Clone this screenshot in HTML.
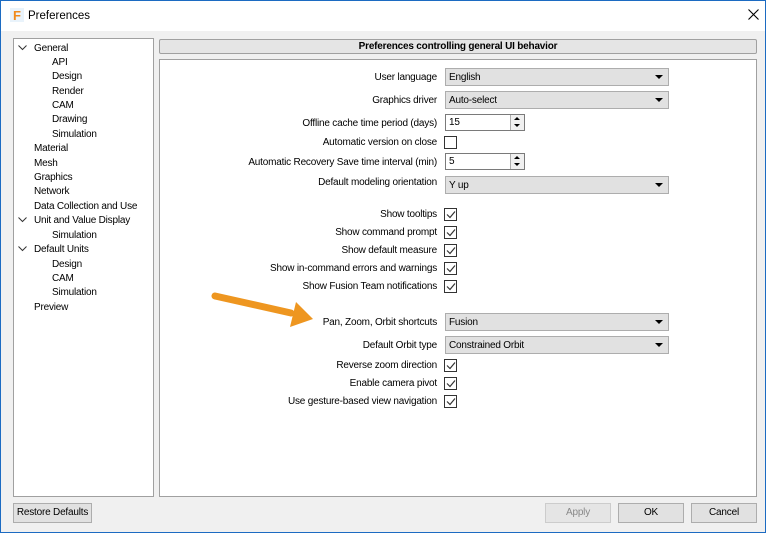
<!DOCTYPE html>
<html><head><style>
*{margin:0;padding:0;box-sizing:border-box}
body{width:768px;height:534px;background:#fff;font-family:"Liberation Sans",Arial,sans-serif;font-size:10px;letter-spacing:-0.2px;color:#000;position:relative;overflow:hidden}
.win{position:absolute;left:0;top:0;width:766px;height:533px;border:1px solid #1c6bc2;background:#f0f0f0}
.title{position:absolute;left:0;top:0;width:764px;height:30px;background:#fff}
.abs{position:absolute}
.panel{position:absolute;background:#fff;border:1px solid #a0a0a0}
.t{position:absolute;white-space:nowrap;line-height:13px}
.lbl{position:absolute;right:328px;white-space:nowrap;line-height:13px}
.dd{position:absolute;left:444px;width:224px;height:18px;background:#e1e1e1;border:1px solid #adadad;padding:2px 0 0 3px;line-height:13px}
.dd:after{content:"";position:absolute;right:5px;top:6px;border-left:4px solid transparent;border-right:4px solid transparent;border-top:4px solid #000}
.sp{position:absolute;left:444px;width:80px;height:17px;background:#fff;border:1px solid #7a7a7a;padding:1px 0 0 3px;line-height:13px}
.sp i{position:absolute;right:0;top:0;width:14px;height:15px;border-left:1px solid #adadad;background:#f0f0f0}
.sp i:before{content:"";position:absolute;left:3px;top:2px;border-left:3px solid transparent;border-right:3px solid transparent;border-bottom:3px solid #000}
.sp i:after{content:"";position:absolute;left:3px;top:9px;border-left:3px solid transparent;border-right:3px solid transparent;border-top:3px solid #000}
.cb{position:absolute;left:443px;width:13px;height:13px;border:1px solid #333;background:#fff}
.btn{position:absolute;top:502px;height:20px;background:#e1e1e1;border:1px solid #adadad;text-align:center;line-height:18px;white-space:nowrap}
</style></head><body>
<div class="win">
<div class="title"></div>
<div class="abs" style="left:9px;top:7px;width:14px;height:14px;background:#e9f3fb"></div>
<div class="abs" style="left:12px;top:8px;font-weight:bold;color:#f08a1c;font-size:13px;line-height:13px">F</div>
<div class="t" style="left:27px;top:8px;font-size:11.5px;line-height:14px;letter-spacing:0">Preferences</div>
<svg class="abs" style="left:747px;top:8px" width="11" height="11"><path d="M0.5 0.5L10.5 10.5M10.5 0.5L0.5 10.5" stroke="#000" stroke-width="1.1"/></svg>

<div class="panel" style="left:12px;top:37px;width:141px;height:459px"></div>
<svg class="abs" style="left:17px;top:44px" width="9" height="6"><path d="M0.5 0.5L4.5 4.5L8.5 0.5" stroke="#333" fill="none"/></svg>
<svg class="abs" style="left:17px;top:216px" width="9" height="6"><path d="M0.5 0.5L4.5 4.5L8.5 0.5" stroke="#333" fill="none"/></svg>
<svg class="abs" style="left:17px;top:245px" width="9" height="6"><path d="M0.5 0.5L4.5 4.5L8.5 0.5" stroke="#333" fill="none"/></svg>
<div class="t" style="left:33px;top:41px">General</div>
<div class="t" style="left:51px;top:55px">API</div>
<div class="t" style="left:51px;top:69px">Design</div>
<div class="t" style="left:51px;top:84px">Render</div>
<div class="t" style="left:51px;top:98px">CAM</div>
<div class="t" style="left:51px;top:112px">Drawing</div>
<div class="t" style="left:51px;top:127px">Simulation</div>
<div class="t" style="left:33px;top:141px">Material</div>
<div class="t" style="left:33px;top:156px">Mesh</div>
<div class="t" style="left:33px;top:170px">Graphics</div>
<div class="t" style="left:33px;top:184px">Network</div>
<div class="t" style="left:33px;top:199px">Data Collection and Use</div>
<div class="t" style="left:33px;top:213px">Unit and Value Display</div>
<div class="t" style="left:51px;top:228px">Simulation</div>
<div class="t" style="left:33px;top:242px">Default Units</div>
<div class="t" style="left:51px;top:257px">Design</div>
<div class="t" style="left:51px;top:271px">CAM</div>
<div class="t" style="left:51px;top:285px">Simulation</div>
<div class="t" style="left:33px;top:300px">Preview</div>

<div class="abs" style="left:158px;top:38px;width:598px;height:15px;background:#e5e5e5;border:1px solid #a0a0a0;border-radius:2px;text-align:center;font-weight:bold;line-height:13px">Preferences controlling general UI behavior</div>
<div class="panel" style="left:158px;top:58px;width:598px;height:438px"></div>

<div class="lbl" style="top:70px">User language</div><div class="dd" style="top:67px">English</div>
<div class="lbl" style="top:93px">Graphics driver</div><div class="dd" style="top:90px">Auto-select</div>
<div class="lbl" style="top:116px">Offline cache time period (days)</div><div class="sp" style="top:113px">15<i></i></div>
<div class="lbl" style="top:135px">Automatic version on close</div><div class="cb" style="top:135px"></div>
<div class="lbl" style="top:155px">Automatic Recovery Save time interval (min)</div><div class="sp" style="top:152px">5<i></i></div>
<div class="lbl" style="top:175px">Default modeling orientation</div><div class="dd" style="top:175px">Y up</div>

<div class="lbl" style="top:207px">Show tooltips</div>
<div class="lbl" style="top:225px">Show command prompt</div>
<div class="lbl" style="top:243px">Show default measure</div>
<div class="lbl" style="top:261px">Show in-command errors and warnings</div>
<div class="lbl" style="top:279px">Show Fusion Team notifications</div>
<div class="lbl" style="top:315px">Pan, Zoom, Orbit shortcuts</div><div class="dd" style="top:312px">Fusion</div>
<div class="lbl" style="top:338px">Default Orbit type</div><div class="dd" style="top:335px">Constrained Orbit</div>
<div class="lbl" style="top:358px">Reverse zoom direction</div>
<div class="lbl" style="top:376px">Enable camera pivot</div>
<div class="lbl" style="top:394px">Use gesture-based view navigation</div>
<svg class="abs" style="left:0;top:0" width="768" height="534">
<g fill="#fff" stroke="#333" stroke-width="1">
<rect x="443.5" y="207.5" width="12" height="12"/><rect x="443.5" y="225.5" width="12" height="12"/><rect x="443.5" y="243.5" width="12" height="12"/><rect x="443.5" y="261.5" width="12" height="12"/><rect x="443.5" y="279.5" width="12" height="12"/><rect x="443.5" y="358.5" width="12" height="12"/><rect x="443.5" y="376.5" width="12" height="12"/><rect x="443.5" y="394.5" width="12" height="12"/>
</g>
<g fill="none" stroke="#333" stroke-width="1.2">
<path d="M446 213.5l3 3l5-6"/><path d="M446 231.5l3 3l5-6"/><path d="M446 249.5l3 3l5-6"/><path d="M446 267.5l3 3l5-6"/><path d="M446 285.5l3 3l5-6"/><path d="M446 364.5l3 3l5-6"/><path d="M446 382.5l3 3l5-6"/><path d="M446 400.5l3 3l5-6"/>
</g>
<path d="M214 295L290 312" stroke="#ee9620" stroke-width="7" stroke-linecap="round"/>
<path d="M295 301L289 326L312 318Z" fill="#ee9620"/>
</svg>

<div class="btn" style="left:12px;width:79px">Restore Defaults</div>
<div class="btn" style="left:544px;width:66px;color:#888;background:#e5e5e5;border-color:#ccc">Apply</div>
<div class="btn" style="left:617px;width:66px">OK</div>
<div class="btn" style="left:690px;width:66px">Cancel</div>
</div>
</body></html>
